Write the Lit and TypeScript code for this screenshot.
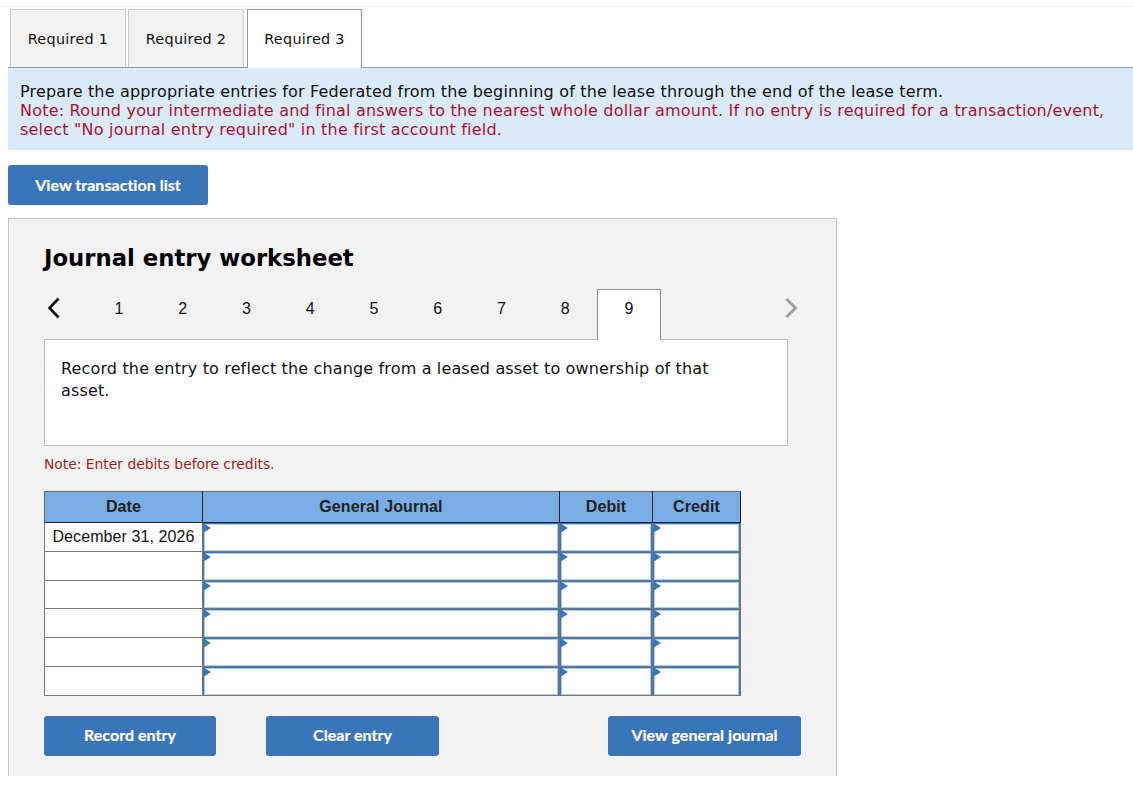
import { LitElement, css, html } from 'lit'
import { customElement } from 'lit/decorators.js'

const tabs = ['Required 1', 'Required 2', 'Required 3']
const steps = [1, 2, 3, 4, 5, 6, 7, 8, 9]
const rows = ['December 31, 2026', '', '', '', '', '']

@customElement('app-root')
export class AppRoot extends LitElement {
  static styles = css`
    :host {
      display: block;
      height: 798px;
      overflow: hidden;
      background: #fff;
      font-family: 'DejaVu Sans', Verdana, sans-serif;
      color: #111;
    }
    .top-line {
      height: 1px;
      background: #f3f3f3;
      margin-bottom: 2px;
      position: relative;
      top: 6px;
    }
    .tabs {
      display: flex;
      gap: 2px;
      height: 58px;
      border-bottom: 1px solid #999;
      margin-left: 8px;
      padding-left: 2px;
      padding-top: 6px;
    }
    .tab {
      width: 116px;
      height: 58px;
      box-sizing: border-box;
      background: #f2f2f2;
      border: 1px solid #ccc;
      border-bottom: none;
      font-size: 14.4px;
      letter-spacing: 0.27px;
      line-height: 58px;
      text-align: center;
    }
    .tab.active {
      background: #fff;
      border-color: #999;
      height: 59px;
      width: 115px;
      margin-left: 1px;
      position: relative;
      z-index: 1;
    }
    .info {
      margin-left: 8px;
      background: #d9ebf9;
      padding: 14px 12px 11px;
      height: 82px;
      box-sizing: border-box;
      font-size: 16px;
      line-height: 19px;
      letter-spacing: 0.17px;
    }
    .info .red {
      color: #b01030;
      letter-spacing: 0.2px;
    }
    .btn {
      display: flex;
      align-items: center;
      justify-content: center;
      height: 40px;
      box-sizing: border-box;
      padding-bottom: 3px;
      background: #3a75b9;
      border-radius: 3px;
      color: #fff;
      font-family: Lato, sans-serif;
      font-weight: 700;
      font-size: 16px;
      letter-spacing: 0.03px;
      -webkit-text-stroke: 0.2px #fff;
    }
    .list-btn {
      width: 200px;
      margin: 15px 0 13px 8px;
      padding-bottom: 1px;
    }
    .panel {
      margin-left: 8px;
      width: 829px;
      height: 558px;
      box-sizing: border-box;
      background: #f2f2f2;
      border: 1px solid #c4c4c4;
      border-bottom: none;
      padding: 0 35px;
    }
    h2 {
      margin: 0;
      padding-top: 24px;
      height: 46px;
      box-sizing: border-box;
      font-size: 22.75px;
      line-height: 30px;
      font-weight: 700;
      color: #000;
    }
    .nav {
      display: flex;
      align-items: flex-start;
      margin-top: 24px;
      height: 50px;
      font-family: 'Liberation Sans', Arial, sans-serif;
      font-size: 16px;
    }
    .arrow {
      width: 43px;
      height: 38px;
      display: flex;
      align-items: center;
    }
    .arrow.next {
      margin-left: auto;
      width: auto;
    }
    .step {
      width: 63.75px;
      height: 38px;
      line-height: 39px;
      text-align: center;
      flex: none;
    }
    .step.active {
      height: 51px;
      background: #fff;
      border: 1px solid #8c8c8c;
      border-bottom: none;
      box-sizing: border-box;
      line-height: 38px;
      position: relative;
      z-index: 1;
    }
    .prompt {
      width: 744px;
      height: 107px;
      box-sizing: border-box;
      background: #fff;
      border: 1px solid #bbb;
      padding: 18px 36px 17px 16px;
      font-size: 16px;
      line-height: 22px;
      letter-spacing: 0.15px;
    }
    .note {
      margin: 10px 0 18px;
      height: 17px;
      font-size: 13.85px;
      line-height: 17px;
      color: #a11c1c;
    }
    table {
      border-collapse: collapse;
      table-layout: fixed;
      width: 697px;
      font-family: 'Liberation Sans', Arial, sans-serif;
      font-size: 16px;
      letter-spacing: 0.1px;
    }
    th {
      height: 30px;
      padding: 0;
      background: #7aade4;
      border: 1px solid #222;
      border-top-color: #666;
      font-weight: 700;
      color: #222;
    }
    th:first-child {
      border-left-color: #666;
    }
    td {
      height: 28px;
      padding: 0;
      border: 1px solid #777;
      background: #fff;
    }
    tr.short td {
      height: 27px;
    }
    td.date {
      text-align: center;
      white-space: nowrap;
    }
    td.field {
      background: #3a75b9;
      position: relative;
    }
    .input {
      display: block;
      height: 27px;
      box-sizing: border-box;
      background: #fff;
      margin: 1px 1px 0;
      border: 1px solid #b4cde8;
      position: relative;
    }
    tr.short .input {
      height: 26px;
    }
    .input::before {
      content: '';
      position: absolute;
      left: -2px;
      top: -2px;
      border-left: 8px solid #3a75b9;
      border-top: 5px solid transparent;
      border-bottom: 5px solid transparent;
    }
    .actions {
      display: flex;
      margin-top: 20px;
    }
    .actions .btn:nth-child(1) {
      width: 172px;
    }
    .actions .btn:nth-child(2) {
      width: 173px;
      margin-left: 50px;
    }
    .actions .btn:nth-child(3) {
      width: 193px;
      margin-left: 169px;
    }
  `

  render() {
    return html`
      <div class="top-line"></div>
      <div class="tabs">
        ${tabs.map((t, i) => html`<div class="tab ${i === 2 ? 'active' : ''}">${t}</div>`)}
      </div>
      <div class="info">
        Prepare the appropriate entries for Federated from the beginning of the lease through the end of the lease term.<br />
        <span class="red">Note: Round your intermediate and final answers to the nearest whole dollar amount. If no entry is required for a transaction/event, select "No journal entry required" in the first account field.</span>
      </div>
      <div class="btn list-btn">View transaction list</div>
      <div class="panel">
        <h2>Journal entry worksheet</h2>
        <div class="nav">
          <div class="arrow">
            <svg width="20" height="24" viewBox="0 0 20 24"><path d="M14.5 2.5 L5.5 12 L14.5 21.5" fill="none" stroke="#111" stroke-width="2.6" /></svg>
          </div>
          ${steps.map((s) => html`<div class="step ${s === 9 ? 'active' : ''}">${s}</div>`)}
          <div class="arrow next">
            <svg width="20" height="24" viewBox="0 0 20 24"><path d="M5.5 3 L14.5 12 L5.5 21" fill="none" stroke="#a0a0a0" stroke-width="3" /></svg>
          </div>
        </div>
        <div class="prompt">Record the entry to reflect the change from a leased asset to ownership of that asset.</div>
        <div class="note">Note: Enter debits before credits.</div>
        <table>
          <colgroup>
            <col style="width:158px" />
            <col style="width:357px" />
            <col style="width:93px" />
            <col style="width:88px" />
          </colgroup>
          <thead>
            <tr><th>Date</th><th>General Journal</th><th>Debit</th><th>Credit</th></tr>
          </thead>
          <tbody>
            ${rows.map(
              (r, i) => html`<tr class="${i === 2 ? 'short' : ''}">
                <td class="date">${r}</td>
                <td class="field"><span class="input"></span></td>
                <td class="field"><span class="input"></span></td>
                <td class="field"><span class="input"></span></td>
              </tr>`
            )}
          </tbody>
        </table>
        <div class="actions">
          <div class="btn">Record entry</div>
          <div class="btn">Clear entry</div>
          <div class="btn">View general journal</div>
        </div>
      </div>
    `
  }
}
